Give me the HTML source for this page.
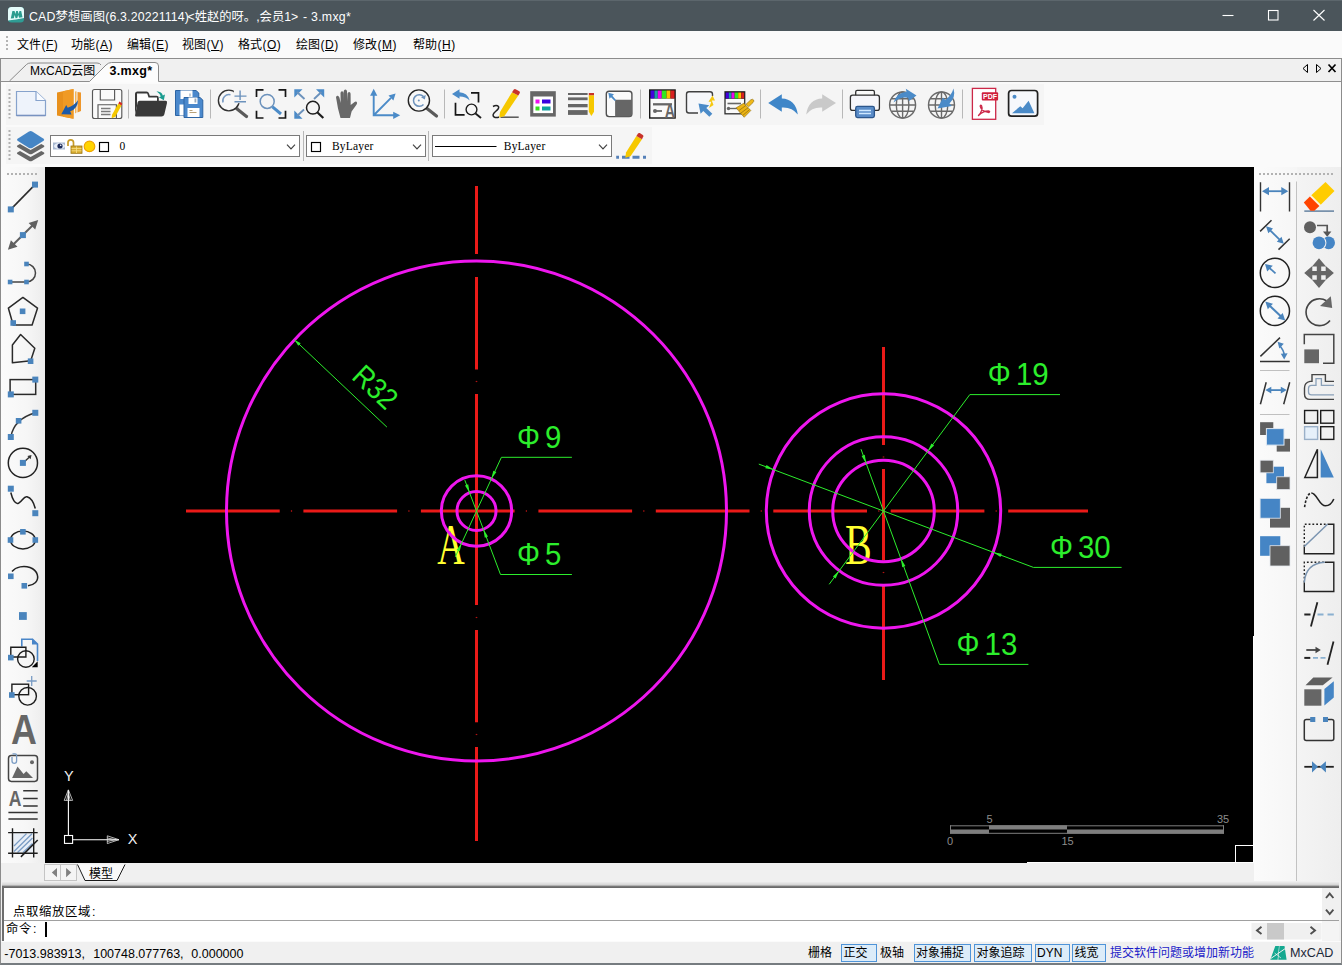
<!DOCTYPE html>
<html lang="zh-CN">
<head>
<meta charset="utf-8">
<title>CAD梦想画图</title>
<style>
*{box-sizing:border-box;margin:0;padding:0}
html,body{width:1342px;height:965px;overflow:hidden;background:#f0f0f0}
body{position:relative;font-family:"Liberation Sans","Noto Sans CJK SC",sans-serif;font-size:12px;color:#000}
.abs{position:absolute}
#title{left:0;top:0;width:1342px;height:30.5px;background:#4b555b;border-top:1px solid #5c666c;color:#fff}
#title .t{position:absolute;top:7.5px;font-size:12.3px;line-height:16px;white-space:nowrap}
#menu{left:0;top:30.5px;width:1342px;height:27.5px;background:#fafafa}
#menu i{font-style:normal;letter-spacing:0.5px;margin-left:0.5px}
#menu span{position:absolute;top:6.9px;font-size:12px;line-height:16px;white-space:nowrap}
#menu u{text-decoration:underline;text-underline-offset:1px}
#frame{left:0;top:58px;width:1341.5px;height:907px;border:1px solid #8c8c8c;border-bottom:2px solid #767c80;background:#f0f0f0}
#tabstrip{left:1px;top:59px;width:1340px;height:22px;background:#f0f0f0}
#tabline{left:1px;top:81px;width:1340px;height:1px;background:#8e8e8e}
#tbarea{left:1px;top:82px;width:1340px;height:85px;background:#fafafa}
#tb1{left:6px;top:84px;width:1038px;height:41px;background:#f5f5f5}
#tb2{left:6px;top:127px;width:646px;height:37px;background:#f5f5f5}
.combo{position:absolute;top:135px;height:22px;background:#fff;border:1px solid #7a7a7a}
.ctx{position:absolute;top:139px;font-family:"Liberation Serif","Noto Serif CJK SC",serif;font-size:11.5px;line-height:14px;letter-spacing:0.2px;white-space:nowrap}
#leftbar{left:1px;top:167px;width:44px;height:696px;background:linear-gradient(90deg,#fbfbfb 0,#f6f6f6 60%,#ececec 100%)}
#rightbar{left:1254px;top:167px;width:87px;height:714px;background:linear-gradient(90deg,#fbfbfb 0,#f6f6f6 43px,#f6f6f6 100%)}
#canvasbg{left:44.5px;top:167.3px;width:1209.1px;height:695.7px;background:#000}
#modelstrip{left:1px;top:863px;width:1252px;height:19px;background:#f0f0f0}
#cmd{left:4px;top:888px;width:1335px;height:53px;background:#fff}
#cmdtop{left:2px;top:882px;width:1337px;height:6px;background:linear-gradient(180deg,#ececec 0,#d4d4d4 50%,#8a8a8a 68%,#6a6a6a 80%,#6a6a6a 100%)}
#cmdleft{left:2px;top:886px;width:2px;height:55px;background:#6e6e6e}
#status{left:1px;top:941px;width:1340px;height:22px;background:#f0f0f0}
.sb{position:absolute;top:944px;height:18px;font-size:12px;line-height:18.5px;white-space:nowrap;text-align:left}
.sb.on{background:#dcecf9;border:1px solid #4f94d8;line-height:16.5px;padding-left:1.5px}
.cn{font-family:"Liberation Sans","Noto Sans CJK SC",sans-serif}
</style>
</head>
<body>
<div id="title" class="abs">
<div class="t" style="left:29px;letter-spacing:0.16px">CAD梦想画图(6.3.20221114)</div>
<div class="t" style="left:187.5px">&lt;姓赵的呀。,会员1&gt;</div>
<div class="t" style="left:303px">-</div>
<div class="t" style="left:311px;letter-spacing:0.3px">3.mxg*</div>
</div>
<div id="menu" class="abs">
<span style="left:17px">文件<i>(<u>F</u>)</i></span>
<span style="left:71px">功能<i>(<u>A</u>)</i></span>
<span style="left:127px">编辑<i>(<u>E</u>)</i></span>
<span style="left:182px">视图<i>(<u>V</u>)</i></span>
<span style="left:238px">格式<i>(<u>O</u>)</i></span>
<span style="left:296px">绘图<i>(<u>D</u>)</i></span>
<span style="left:353px">修改<i>(<u>M</u>)</i></span>
<span style="left:413px">帮助<i>(<u>H</u>)</i></span>
</div>
<div id="frame" class="abs"></div>
<div id="tabstrip" class="abs"></div>
<div id="tabline" class="abs"></div>
<div id="tbarea" class="abs"></div>
<div id="tb1" class="abs"></div>
<div id="tb2" class="abs"></div>
<div id="leftbar" class="abs"></div>
<div id="rightbar" class="abs"></div><div class="abs" style="left:1297px;top:167px;width:44px;height:714px;background:linear-gradient(90deg,#f4f4f4,#eeeeee)"></div>
<div id="canvasbg" class="abs"></div>
<div id="modelstrip" class="abs"></div>
<div id="cmd" class="abs"></div><div id="cmdtop" class="abs"></div><div id="cmdleft" class="abs"></div>
<div id="status" class="abs"></div><div class="abs" style="left:1px;top:941px;width:1340px;height:1px;background:#fbfbfb"></div>

<!-- combos -->
<div class="combo" style="left:50px;width:250px"></div>
<div class="combo" style="left:306px;width:120px"></div>
<div class="combo" style="left:432px;width:180px"></div>

<svg class="abs" style="left:0;top:0" width="1342" height="965" viewBox="0 0 1342 965">
<g id="drawing" fill="none">
<g fill="#ffff30" stroke="none" font-family="Liberation Serif, serif" font-size="56">
<text transform="translate(437.3,564) scale(0.68,1)">A</text>
<text transform="translate(845.1,564) scale(0.716,1)">B</text>
</g>
<g stroke="#ea1a18" stroke-width="3">
<path d="M186.0 511H279.7"/>
<path d="M290.9 511h1.2" stroke-width="1.6" opacity=".75"/>
<path d="M303.4 511H397.1"/>
<path d="M408.3 511h1.2" stroke-width="1.6" opacity=".75"/>
<path d="M420.9 511H514.6"/>
<path d="M525.8 511h1.2" stroke-width="1.6" opacity=".75"/>
<path d="M538.4 511H632.1"/>
<path d="M643.2 511h1.2" stroke-width="1.6" opacity=".75"/>
<path d="M655.8 511H749.5"/>
<path d="M760.7 511h1.2" stroke-width="1.6" opacity=".75"/>
<path d="M773.3 511H867.0"/>
<path d="M878.2 511h1.2" stroke-width="1.6" opacity=".75"/>
<path d="M890.7 511H984.4"/>
<path d="M995.6 511h1.2" stroke-width="1.6" opacity=".75"/>
<path d="M1008.2 511H1088.0"/>
<path d="M476.5 186V254"/>
<path d="M476.5 277V369.5"/>
<path d="M476.5 394V605"/>
<path d="M476.5 630V722.3"/>
<path d="M476.5 747V841"/>
<path d="M476.5 380.9v1.2" stroke-width="1.6" opacity=".75"/>
<path d="M476.5 616.9v1.2" stroke-width="1.6" opacity=".75"/>
<path d="M476.5 733.9v1.2" stroke-width="1.6" opacity=".75"/>
<path d="M883.5 347V445"/>
<path d="M883.5 469V560.5"/>
<path d="M883.5 584.5V680"/>
<path d="M883.5 456.4v1.2" stroke-width="1.6" opacity=".75"/>
<path d="M883.5 571.9v1.2" stroke-width="1.6" opacity=".75"/>
</g>
<g stroke="#ee16ee" stroke-width="3">
<circle cx="476.5" cy="511.0" r="250.00"/>
<circle cx="476.5" cy="511.0" r="35.16"/>
<circle cx="476.5" cy="511.0" r="19.53"/>
<circle cx="883.5" cy="511.0" r="117.19"/>
<circle cx="883.5" cy="511.0" r="74.22"/>
<circle cx="883.5" cy="511.0" r="50.78"/>
</g>
<g stroke="#2cee2c" stroke-width="1">
<path d="M571.9 457.3H501.4L455.3 556.8"/>
<path d="M491.3 479.1L493.3 470.7L496.4 472.1Z" fill="#2cee2c" stroke="none"/>
<path d="M461.7 542.9L459.7 551.3L456.6 549.9Z" fill="#2cee2c" stroke="none"/>
<path d="M571.9 574.5H500.5L464.8 480.1"/>
<path d="M483.4 529.3L488.0 536.6L484.8 537.8Z" fill="#2cee2c" stroke="none"/>
<path d="M469.6 492.7L465.0 485.4L468.2 484.2Z" fill="#2cee2c" stroke="none"/>
<path d="M1060.0 394.6H969.8L829.2 584.3"/>
<path d="M927.7 451.4L931.4 443.5L934.1 445.6Z" fill="#2cee2c" stroke="none"/>
<path d="M839.3 570.6L835.6 578.5L832.9 576.4Z" fill="#2cee2c" stroke="none"/>
<path d="M1121.6 567.4H1033.4L758.8 464.1"/>
<path d="M993.2 552.3L1001.7 553.7L1000.5 556.9Z" fill="#2cee2c" stroke="none"/>
<path d="M773.8 469.7L765.3 468.3L766.5 465.1Z" fill="#2cee2c" stroke="none"/>
<path d="M1028.4 664.4H939.4L861.0 449.2"/>
<path d="M900.9 558.7L905.4 566.1L902.2 567.3Z" fill="#2cee2c" stroke="none"/>
<path d="M866.1 463.3L861.6 455.9L864.8 454.7Z" fill="#2cee2c" stroke="none"/>
<path d="M294.9 340.2L386.9 427.1"/>
<path d="M294.4 339.7L300.7 343.3L298.3 345.8Z" fill="#2cee2c" stroke="none"/>
</g>
<g fill="#2cee2c" stroke="none" font-family="Liberation Sans, sans-serif" font-size="32">
<text transform="translate(516.9,448) scale(0.9,1)">Φ</text><text transform="translate(545.0,448) scale(0.92,1)">9</text>
<text transform="translate(516.9,564.6) scale(0.9,1)">Φ</text><text transform="translate(545.0,564.6) scale(0.92,1)">5</text>
<text transform="translate(987.8,384.6) scale(0.9,1)">Φ</text><text transform="translate(1015.9,384.6) scale(0.92,1)">19</text>
<text transform="translate(1049.8999999999999,557.6) scale(0.9,1)">Φ</text><text transform="translate(1078.0,557.6) scale(0.92,1)">30</text>
<text transform="translate(956.5,655.2) scale(0.9,1)">Φ</text><text transform="translate(984.6,655.2) scale(0.92,1)">13</text>
<text transform="translate(350.5,377.9) rotate(43.2) scale(0.885,1)" font-size="30" x="0" y="0">R32</text>
</g>
<g stroke="#fff" stroke-width="1.1">
<rect x="64.5" y="835.5" width="8.1" height="7.9"/>
<path d="M68.4 835.5V790M73 839.7H119"/>
<path d="M68.4 789.8L64.2 800.4H72.6ZM68.4 792.5L66.6 800.4M68.4 792.5L70.2 800.4" stroke-width=".75" stroke="#e8e8e8"/>
<path d="M119 839.7L107.3 835.8V843.6ZM116.2 839.7L107.3 838M116.2 839.7L107.3 841.4" stroke-width=".75" stroke="#e8e8e8"/>
</g>
<g fill="#f0f0f0" stroke="none" font-family="Liberation Sans, sans-serif" font-size="14.5"><text x="63.9" y="780.6">Y</text><text x="127.7" y="843.8">X</text></g>
<g fill="#7e7e7e" stroke="none">
<rect x="950" y="825.3" width="274" height="1"/><rect x="950" y="832.8" width="274" height="1"/>
<rect x="950" y="829.5" width="39" height="4"/><rect x="989" y="825.3" width="78" height="4.2"/><rect x="1067" y="829.5" width="157" height="4"/>
<rect x="950" y="825.3" width="1" height="8"/><rect x="1223" y="825.3" width="1" height="8"/>
</g>
<g fill="#8c8c8c" stroke="none" font-family="Liberation Sans, sans-serif" font-size="11" text-anchor="middle">
<text x="989.5" y="822.5">5</text><text x="1223" y="822.5">35</text><text x="950" y="844.5">0</text><text x="1067.5" y="844.5">15</text>
</g>
<g stroke="#fff" stroke-width="1"><path d="M1027 862.5H1253.5M1253.5 636V863"/><rect x="1235.5" y="845.5" width="18" height="17"/></g>
</g>
<g id="chrome">
<!-- app icon -->
<rect x="8" y="7" width="16" height="15.5" rx="3.5" fill="#2f9c94"/>
<path d="M8 10.5a3.5 3.5 0 0 1 3.500-3.500h9a3.500 3.500 0 0 1 3.500 3.500v7.500q-8 1.600-16 2.500z" fill="#e4fbfa"/>
<path d="M10.800 18.500l1.600-7.500h2.200l.700 3 .900-3h1.600l.900 3 .700-3h1.800l1.300 6.300-3.400.500-.900-2.800-.900 3-1.700.200-.900-3.200-.900 3.300z" fill="#2a9d8f"/>
<!-- window controls -->
<g stroke="#fff" stroke-width="1.100" fill="none">
<path d="M1222.500 15.500h11"/><rect x="1268.500" y="10.500" width="9.500" height="9.500"/><path d="M1313.500 10l11 10.500M1324.500 10l-11 10.500"/>
</g>
<!-- menu gripper -->
<g fill="#b4b4b4">
<rect x="6" y="36" width="2" height="2"/><rect x="6" y="40" width="2" height="2"/><rect x="6" y="44" width="2" height="2"/><rect x="6" y="48" width="2" height="2"/>
</g>
<!-- tabs -->
<path d="M9.500 81L26.500 64.500Q28 63 30.500 63H97Q100 63 101 65" fill="#f0f0f0" stroke="#8a8a8a" stroke-width="1"/>
<path d="M89.500 81.500L106 65Q108.500 62.500 111.500 62.500H155Q158.500 62.500 158.500 66V81.500L158.500 82.500H89.500Z" fill="#fcfcfc" stroke="none"/>
<path d="M89.500 81.500L106 65Q108.500 62.500 111.500 62.500H155Q158.500 62.500 158.500 66V81.500" fill="none" stroke="#8a8a8a" stroke-width="1"/>
<!-- tab strip nav -->
<g stroke="#000" stroke-width="1" fill="none"><path d="M1307.500 64.500v8l-4.500-4zM1316.500 64.500v8l4.500-4z"/></g>
<path d="M1328.500 64.500l7 7.500M1335.500 64.500l-7 7.500" stroke="#000" stroke-width="1.700" fill="none"/>
<!-- model tab nav -->
<rect x="44.500" y="864.500" width="16" height="16" fill="#f4f4f4" stroke="#c4c4c4"/><rect x="60.500" y="864.500" width="16" height="16" fill="#f4f4f4" stroke="#c4c4c4"/>
<path d="M57 868V877.200L51.800 872.600ZM66.100 868V877.200L71.300 872.600Z" fill="#808080"/>
<path d="M77.500 864.500L85 880.500H117L125 864.500Z" fill="#f9f9f9"/>
<path d="M77.500 864.500L85 880.500H117L125 864.500" fill="none" stroke="#1a1a1a" stroke-width="1"/>
<!-- scrollbars -->
<rect x="1322" y="888" width="17" height="32" fill="#f0f0f0"/>
<rect x="1251.500" y="923" width="70" height="16.500" fill="#f0f0f0"/>
<rect x="1322" y="921" width="17" height="20" fill="#f4f4f4"/>
<rect x="1267" y="923" width="17" height="16.500" fill="#c9c9c9"/>
<g fill="none" stroke="#505050" stroke-width="1.900"><path d="M1326 898L1329.700 893.600L1333.400 898M1326 909.700L1329.700 914.100L1333.400 909.700M1261.500 926.800L1257 930.400L1261.500 934M1310.500 926.800L1315 930.400L1310.500 934"/></g>
<path d="M4 920.500H1339" stroke="#a0a0a0" stroke-width="1"/>
<!-- mxcad logo -->
<path d="M1270.300 959.700L1275.300 946H1279L1277.600 959.700ZM1279.500 946H1284.500L1286.600 959.700H1278.300Z" fill="#14a890"/>
<path d="M1270.800 958.500L1285.300 948.500" stroke="#f0f0f0" stroke-width="1"/><path d="M1274.600 953L1281 958" stroke="#f0f0f0" stroke-width=".7"/>
</g>

<g id="top-toolbar">
<!-- grippers -->
<g fill="#b2b2b2">
<path d="M8.500 89h2v2h-2zM8.500 93h2v2h-2zM8.500 97h2v2h-2zM8.500 101h2v2h-2zM8.500 105h2v2h-2zM8.500 109h2v2h-2zM8.500 113h2v2h-2zM8.500 117h2v1.500h-2z"/>
<path d="M8.500 130h2v2h-2zM8.500 134h2v2h-2zM8.500 138h2v2h-2zM8.500 142h2v2h-2zM8.500 146h2v2h-2zM8.500 150h2v2h-2zM8.500 154h2v2h-2zM8.500 158h2v2h-2z"/>
</g>
<!-- separators -->
<g stroke="#b8b8b8" stroke-width="1"><path d="M128.500 89.500v29M210.500 89.500v29M444.500 89.500v29M640.500 89.500v29M760.500 89.500v29M842.500 89.500v29M962.500 89.500v29M303.500 131v30M428.500 131v30"/></g>

<!-- 1 new -->
<path d="M16.500 91.500H36L45.500 100.500V115.500H16.500Z" fill="#eef3fb" stroke="#86a2cc" stroke-width="1.200"/>
<path d="M36 91.500V100.500H45.500" fill="#f8fbff" stroke="#86a2cc" stroke-width="1.200"/>
<path d="M16.500 115.500H45.500" stroke="#7892c0" stroke-width="1.600"/>

<!-- 2 orange folder with arrow -->
<path d="M57 92.500L73.500 89V118.800L57 115.500Z" fill="#e8901c"/>
<path d="M63 91.300L73.500 89V118.800L63 116.700Z" fill="#f09a24"/>
<path d="M75 91.500L76.500 91.200V112.500L75 113.500Z" fill="#f4b456"/>
<path d="M77.500 92L81 92.500V111L77.500 112.500Z" fill="#ee962a"/>
<path d="M78 100.300Q77.800 109 70.200 111.200L71.500 114.600L61.300 114.300L66.200 105L67.700 107.800Q74 105.800 78 100.300Z" fill="#1c5aa8"/>

<!-- 3 save with pencil -->
<rect x="92.500" y="89.500" width="29.300" height="29" rx="2" fill="#fafafa" stroke="#585858" stroke-width="1.150"/>
<path d="M100.300 89.500V100H114.600V89.500M98 118.500V104.700H116.400V118.500" fill="none" stroke="#585858" stroke-width="1.150"/>
<path d="M101 108.500h9.500M101 111.500h9.500M101 114.500h9.500" stroke="#7c7c7c" stroke-width="1.500"/>
<path d="M118.300 103.500L121.500 105.500L115.200 117L111.600 118.300L112 114.800Z" fill="#f5c800"/>
<path d="M118.300 103.500L119.500 101.600L122.300 103.600L121.500 105.500Z" fill="#d82a20"/>

<!-- 4 dark folder with teal arrow -->
<path d="M135 94Q135 91.500 137.500 91.500H146.500Q148.500 91.500 149 93.500L149.800 95.800H156.500Q158.800 95.800 158.800 98V101H137.800V95H146.500" fill="#fff"/>
<path d="M135 114V94Q135 91.500 137.500 91.500H146.500Q148.500 91.500 149 93.500L149.800 95.800H156.500Q158.800 95.800 158.800 98V101.500H157V97.600H148.500L147.200 93.400H137V106Z" fill="#383838"/>
<path d="M139.500 100.800H165.500Q167.500 100.800 167 103L164.300 114.600Q163.800 116.600 161.500 116.600H137Q134.600 116.600 135.200 114.400L137.600 102.600Q138 100.800 139.500 100.800Z" fill="#383838"/>
<path d="M156.500 91.300Q162 91.800 162.800 95.500L165 94.600L163.800 100.200L158.800 97.300L160.800 96.400Q160 93.800 156.500 91.300Z" fill="#1a9c90"/>

<!-- 5 double floppy -->
<path d="M175.500 90.500H196L198.800 93V115.500H175.500Z" fill="#4a88cc" stroke="#2c64a4" stroke-width="1"/>
<rect x="180.500" y="90.500" width="12" height="8.500" fill="#fff"/>
<rect x="179.500" y="104.500" width="10" height="11" fill="#fff"/>
<path d="M184 97.500H200L202.800 100V117.500H184Z" fill="#4a88cc" stroke="#2c64a4" stroke-width="1"/>
<rect x="188.500" y="97.500" width="9" height="6.500" fill="#fff"/><rect x="194.500" y="98.500" width="1.800" height="4" fill="#9ab"/>
<rect x="187.500" y="108" width="12" height="9" fill="#fff"/>
<path d="M189.500 110.500h3M189.500 112.500h7" stroke="#b9a27a" stroke-width="1"/>
<path d="M190 93.500v3" stroke="#9ab" stroke-width="1.200"/>

<!-- 6 zoom +/- -->
<path d="M236.500 108.500L246.500 116.500" stroke="#5a5a5a" stroke-width="3.200" stroke-linecap="round"/>
<circle cx="228.800" cy="100.500" r="10.400" fill="#f8f8f8" stroke="#303030" stroke-width="1.400"/>
<path d="M223 102.500A6.200 6.200 0 0 1 230.500 94.800" fill="none" stroke="#7a9cc4" stroke-width="1.500"/>
<rect x="233.800" y="90" width="13.500" height="13.200" fill="#f5f5f5"/>
<path d="M234.500 95.400H246.500V96.700H234.500ZM239.400 90.500h1.400v9.500h-1.400ZM234.500 101.100H246V102.400H234.500Z" fill="#6c92bc"/>

<!-- 7 zoom window -->
<path d="M263.500 89.800H256.500V97M278.500 89.800H285.500V97M263.500 118H256.500V110.800M278.500 118H285.500V110.800" fill="none" stroke="#161616" stroke-width="1.700"/>
<circle cx="267.200" cy="101.400" r="7" fill="none" stroke="#6c92bc" stroke-width="1.500"/>
<path d="M272.500 106.800L281 114" stroke="#4b8bc8" stroke-width="3"/>

<!-- 8 zoom extents -->
<g fill="#4b8bc8"><path d="M294.300 89.300H302.500L294.300 97.500ZM324.200 89.300V97.500L316 89.300ZM294.300 118.700V110.500L302.500 118.700Z"/></g>
<path d="M297 92L304.500 99M321.500 92L314 99M297 116L304 109.500" stroke="#6c92bc" stroke-width="1.900"/>
<circle cx="312.900" cy="107.700" r="6.400" fill="none" stroke="#1c1c1c" stroke-width="1.500"/>
<path d="M317.500 112.500L323.300 118" stroke="#1c1c1c" stroke-width="2.200"/>

<!-- 9 hand -->
<path d="M340.500 118L338 108.500L336 97.200Q336.200 95.400 337.800 95.700Q339 96.100 339.400 97.500L340.700 103L340.500 93Q340.700 91.300 342 91.300Q343.400 91.400 343.600 93L343.900 101L343.700 91.200Q344 89.500 345.400 89.500Q346.800 89.600 347 91.200L347.400 101L347.600 93.600Q347.900 92 349.100 92Q350.500 92.100 350.600 93.700L350.700 105L354.600 101.900Q356.500 101 357.100 102.700Q357.200 104 355.900 105.400L351.600 111.600L350 118Z" fill="#686868"/>

<!-- 10 axes -->
<g stroke="#4b8bc8" stroke-width="1.900" fill="none"><path d="M373.700 95V115.300H394M374.500 114.500L391 97.800"/></g>
<g fill="#4b8bc8"><path d="M373.700 88.800L377.300 95.700H370.100ZM400.200 115.300L393.200 118.900V111.700ZM395.600 93.400L393.400 100.500L388.500 95.500Z"/></g>

<!-- 11 zoom previous -->
<path d="M427 108.500L436.500 116" stroke="#5a5a5a" stroke-width="3.200" stroke-linecap="round"/>
<circle cx="418.900" cy="100.500" r="10.600" fill="#f8f8f8" stroke="#242424" stroke-width="1.400"/>
<path d="M423.500 104.500A5.800 5.800 0 1 1 423.500 96.500" fill="none" stroke="#6c92bc" stroke-width="1.500"/>
<path d="M425.800 95L424.800 99.500L421 97.200Z" fill="#6c92bc"/>
<circle cx="418.800" cy="100.500" r="1" fill="#6c92bc"/>

<!-- 12 zoom back -->
<path d="M471 92.800H478.500V102.500M455.500 102.800V114.900H464.600" fill="none" stroke="#161616" stroke-width="1.700"/>
<circle cx="471.500" cy="109.500" r="5.400" fill="none" stroke="#1c1c1c" stroke-width="1.400"/>
<path d="M475.500 113.500L481 118" stroke="#1c1c1c" stroke-width="1.900"/>
<path d="M452 94L459.500 89.300V92.200Q467.500 92.500 469.700 100.500Q465.500 96.500 459.500 96.600V98.800Z" fill="#4b8bc8"/>

<!-- 13 pencil with squiggle -->
<path d="M493 106.500Q496.500 104.500 498.500 106.500Q499.500 108.500 495.500 111.500Q491.500 115 494 117Q496.500 118.200 499 117" fill="none" stroke="#222" stroke-width="1.500"/>
<path d="M500.500 117.200H518.700" stroke="#555" stroke-width="1.500"/>
<path d="M512 92.200L518.300 95.600L504.300 116.200L499.200 117.600L500 112Z" fill="#f6c800"/>
<path d="M512 92.200L513.800 89.500Q514.600 88.700 515.600 89.200L519.300 91.300Q520.200 92 519.800 93L518.300 95.600Z" fill="#c8322a"/>

<!-- 14 palette -->
<rect x="530.200" y="91.200" width="25.600" height="25.400" fill="#666"/>
<rect x="533.300" y="96.500" width="19.700" height="16.600" fill="#fff"/>
<rect x="535.500" y="99.500" width="4" height="4" fill="#f010f0"/><rect x="542" y="99.500" width="8.500" height="4" fill="#3a00e0"/>
<rect x="535.500" y="106.500" width="4" height="4" fill="#38e020"/><rect x="542" y="106.500" width="8.500" height="4" fill="#10a0a0"/>

<!-- 15 lines with pencil -->
<g fill="#666"><rect x="568" y="93" width="19.600" height="2"/><rect x="568" y="97.400" width="19.600" height="2.800"/><rect x="568" y="104" width="19.600" height="3.300"/><rect x="568" y="110.100" width="19.600" height="4.800"/></g>
<path d="M588.800 95.200H594V111.700L591.400 116L588.800 111.700Z" fill="#f6c800"/><rect x="588.800" y="93" width="5.200" height="2.200" fill="#c8322a"/>

<!-- 16 box with gray square -->
<rect x="606.300" y="91.300" width="25.600" height="25.300" rx="2.800" fill="#fafafa" stroke="#505050" stroke-width="1.400"/>
<path d="M615.100 99.700H632V113.800Q632 116.600 629.200 116.600H615.100Z" fill="#666"/>
<path d="M608.300 92.800L614 94.200L612.400 95.800L616 100L614.800 101L611 97.200L609.500 98.800Z" fill="#4b8bc8"/>

<!-- 17 colorbar A -->
<rect x="649.700" y="90" width="25.400" height="28" fill="#fafafa" stroke="#141414" stroke-width="1.400"/>
<rect x="650" y="90" width="25" height="8.500" fill="#141414"/>
<rect x="650.500" y="90.500" width="4" height="8" fill="#4400dd"/><rect x="654.500" y="90.500" width="3.300" height="8" fill="#189ca4"/><rect x="657.800" y="90.500" width="4" height="8" fill="#f000f0"/><rect x="661.800" y="90.500" width="4.700" height="8" fill="#30e820"/><rect x="666.500" y="90.500" width="4" height="8" fill="#f8c000"/><rect x="670.500" y="90.500" width="4" height="8" fill="#d82020"/>
<path d="M653 104.300H672" stroke="#666" stroke-width="2.300"/>
<path d="M654.500 111H662" stroke="#666" stroke-width="1.800"/><circle cx="655" cy="111" r="2" fill="#666"/>
<text transform="translate(664.800,117.600) scale(0.680,1)" font-family="Liberation Sans, sans-serif" font-weight="bold" font-size="21" fill="#666">A</text>

<!-- 18 select with arrow -->
<path d="M698 113H689Q686.500 113 686.500 110.500V94.200Q686.500 91.700 689 91.700H710Q712.500 91.700 712.500 94.200V96" fill="#f6f7fa" stroke="#404040" stroke-width="1.400"/>
<path d="M712.500 95.500L715 100.500H711.800L713.500 105L709 108L711.300 101.800H708.500Z" fill="#f6c810"/>
<path d="M698.500 103.500L709.200 105.200L706.300 108L712.300 113.800L709.300 116.800L703.300 111L700.600 113.800Z" fill="#4b8bc8"/>

<!-- 19 colorbar brush -->
<rect x="725" y="91.800" width="19.700" height="22" fill="#fafafa" stroke="#303030" stroke-width="1.300"/>
<rect x="725" y="91.800" width="19.700" height="7" fill="#1c1c1c"/>
<rect x="725.700" y="92.500" width="3.200" height="6" fill="#4400dd"/><rect x="728.900" y="92.500" width="2.600" height="6" fill="#189ca4"/><rect x="731.500" y="92.500" width="3.100" height="6" fill="#f000f0"/><rect x="734.600" y="92.500" width="3.600" height="6" fill="#30e820"/><rect x="738.200" y="92.500" width="3" height="6" fill="#f8c000"/><rect x="741.200" y="92.500" width="2.900" height="6" fill="#d82020"/>
<path d="M727.500 103.500H741" stroke="#666" stroke-width="1.600"/><path d="M728 108.500H737" stroke="#666" stroke-width="1.400"/><circle cx="728.500" cy="108.500" r="1.700" fill="#666"/>
<path d="M750.800 99.800Q752.600 98.600 753.600 100Q754.300 101.300 753 102.600L748.600 106.800L746 104.300Z" fill="#f0b818" stroke="#8a6a10" stroke-width=".6"/>
<path d="M736.200 107.800L743.800 103.200L750.800 110.500L744.200 117.300Q740 113 736.200 107.800Z" fill="#ecb414" stroke="#8a6a10" stroke-width=".6"/>
<path d="M739 110.500L745.800 105.500M741 113L748 107.800M743 115.200L749.600 109.600" stroke="#8a6a10" stroke-width=".7" fill="none"/>

<!-- 20 undo -->
<path d="M768.200 103L781.800 94.300V98.600Q795.500 99 797.800 114.500Q792 106.800 781.800 107.500V111.700Z" fill="#3f86c8"/>
<!-- 21 redo -->
<path d="M836 103L822.200 94.300V98.600Q808.500 99 806.200 114.500Q812 106.800 822.200 107.500V111.700Z" fill="#c9c9c9"/>

<!-- 22 printer -->
<rect x="855.700" y="90.400" width="18.700" height="6" rx="1.500" fill="#fafafa" stroke="#303030" stroke-width="1.300"/>
<rect x="850.400" y="95.200" width="29" height="15.200" rx="2.200" fill="#f6f6fa" stroke="#303030" stroke-width="1.300"/>
<rect x="855.700" y="106.400" width="18.700" height="11.200" rx="1.800" fill="#5a8cc8" stroke="#2c568c" stroke-width="1.300"/>
<path d="M859 110.600H871M859 113.600H871" stroke="#cfe8ff" stroke-width="1.500"/>

<!-- 23 globe arrow 1 -->
<g fill="none" stroke="#6a6a6a" stroke-width="1.400">
<circle cx="902.600" cy="105" r="13"/><ellipse cx="902.600" cy="105" rx="6.300" ry="13"/><path d="M902.600 92V118M889.600 105H915.600M891.400 98.800H913.800M891.400 111.300H913.800"/>
</g>
<path d="M893.500 102.500Q897 92.500 906.500 91.800L905.800 88.800L916.500 95.500L909 101L908.200 97.800Q901 96 893.500 102.500Z" fill="#4b8bc8"/>
<!-- 24 globe arrow 2 -->
<g fill="none" stroke="#6a6a6a" stroke-width="1.400">
<circle cx="941.500" cy="105" r="13"/><ellipse cx="941.500" cy="105" rx="6.300" ry="13"/><path d="M941.500 92V118M928.500 105H954.500M930.300 98.800H952.700M930.300 111.300H952.700"/>
</g>
<path d="M953.500 88.500Q956 97 949.500 103.500L951.800 106L937.500 108.500L943 97.500L945.200 100Q951.500 95.500 953.500 88.500Z" fill="#4b8bc8"/>

<!-- 25 pdf -->
<rect x="972.400" y="88.400" width="23.300" height="30.900" fill="#fff" stroke="#cc2848" stroke-width="1.300"/>
<rect x="981.800" y="92.200" width="16.300" height="8.300" rx="1" fill="#d0203c"/>
<text x="983" y="99.300" font-family="Liberation Sans, sans-serif" font-weight="bold" font-size="7.500" fill="#fff" textLength="14" lengthAdjust="spacingAndGlyphs">PDF</text>
<path d="M978.500 115.500Q983.500 110 981.500 105.500Q980.300 104.800 980.200 106.300Q981.500 111.500 989 112.500Q990.500 111.300 988.500 110.800Q983 110.800 978.500 115.500Z" fill="none" stroke="#cc2848" stroke-width="1.300" stroke-linejoin="round"/>

<!-- 26 image -->
<rect x="1008.600" y="90.500" width="29" height="25.700" rx="3" fill="#f6f8fc" stroke="#202020" stroke-width="1.700"/>
<circle cx="1014.500" cy="96.800" r="2" fill="#4b8bc8"/>
<path d="M1012 113.200L1020.300 106.300L1022.600 108.200L1028.600 100.800L1034.400 113.200Z" fill="#4b8bc8"/>

<!-- layers icon -->
<path d="M17.300 152.500L20 151L30.600 157L41.300 151L44 152.500Q44.800 153.300 44 154L32 161Q30.600 161.700 29.200 161L17.300 154Q16.500 153.300 17.300 152.500Z" fill="#666"/>
<path d="M17.300 145.500L20 144L30.600 150L41.300 144L44 145.500Q44.800 146.300 44 147L32 154Q30.600 154.700 29.200 154L17.300 147Q16.500 146.300 17.300 145.500Z" fill="#666"/>
<path d="M17.600 138.700L29 131.500Q30.600 130.600 32.200 131.500L43.600 138.700Q44.800 139.700 43.600 140.700L32.200 147.900Q30.600 148.800 29 147.900L17.600 140.700Q16.400 139.700 17.600 138.700Z" fill="#4585c5"/>

<!-- combo 1 content -->
<path d="M53 142.500h12v7h-12z" fill="#a8b8d0"/><ellipse cx="59.500" cy="146" rx="5.500" ry="3" fill="#e8eef8"/><circle cx="60" cy="146" r="2.600" fill="#1c2c5c"/><circle cx="60.700" cy="145.300" r=".8" fill="#fff"/>
<path d="M68 146V142.500Q68 139.800 70.700 139.800Q73.500 139.800 73.500 142.500V146" fill="none" stroke="#c89c28" stroke-width="1.700"/>
<rect x="71" y="146" width="11" height="7.300" fill="#d8ac30" stroke="#9a7410" stroke-width=".8"/>
<path d="M71.500 148.500H81.500M71.500 150.800H81.500M76.500 146.500V153" stroke="#f8e088" stroke-width=".8"/>
<circle cx="89.500" cy="146.400" r="5.300" fill="#ffd400" stroke="#f0a400" stroke-width="1.200"/>
<rect x="99.500" y="142.500" width="9" height="9" fill="#fff" stroke="#000" stroke-width="1.150"/>
<!-- combo arrows -->
<g fill="none" stroke="#444" stroke-width="1.200"><path d="M287 144.600L291 148.800L295 144.600M413 144.600L417 148.800L421 144.600M599 144.600L603 148.800L607 144.600"/></g>
<!-- combo 2 square -->
<rect x="311.500" y="142.500" width="9" height="9" fill="#fff" stroke="#000" stroke-width="1.150"/>
<!-- combo 3 line -->
<path d="M435 146.500H496.500" stroke="#000" stroke-width="1"/>
<!-- pencil dash icon -->
<path d="M616.200 157.300H619M622 157.300H629.500M632.500 157.300H639.500M643 157.300H646" stroke="#5580b8" stroke-width="3"/>
<path d="M636.400 136L642 139.200L630.500 156.200L625.300 157.800L626 152.500Z" fill="#f6c800"/>
<path d="M636.400 136L638 133.400Q638.700 132.600 639.700 133.100L642.800 134.900Q643.700 135.600 643.300 136.600L642 139.200Z" fill="#c8322a"/>
</g>

<g id="left-toolbar">
<g fill="#b2b2b2"><path d="M7 173h2v2h-2zM11 173h2v2h-2zM15 173h2v2h-2zM19 173h2v2h-2zM23 173h2v2h-2zM27 173h2v2h-2zM31 173h2v2h-2zM35 173h2v2h-2z"/></g>
<!-- L1 line -->
<path d="M10.800 209.400L35 184.600" stroke="#2c2c2c" stroke-width="1.600"/>
<g fill="#4a84bc"><rect x="32" y="181.600" width="6" height="6"/><rect x="7.800" y="206.400" width="6" height="6"/></g>
<!-- L2 double arrow -->
<path d="M12.500 245.300L33.500 224.500" stroke="#606060" stroke-width="2"/>
<path d="M38.200 220L35.200 229.600L28.600 223ZM7.900 249.800L10.900 240.200L17.500 246.800Z" fill="#606060"/>
<rect x="19.900" y="232.100" width="6" height="6" fill="#4a84bc"/>
<!-- L3 line arc -->
<path d="M10 282H26.500A9 9 0 0 0 26.500 264" fill="none" stroke="#444" stroke-width="1.500"/>
<g fill="#4a84bc"><rect x="7.800" y="279.700" width="4.600" height="4.600"/><rect x="24.200" y="279.700" width="4.600" height="4.600"/><rect x="24.200" y="261.700" width="4.600" height="4.600"/></g>
<!-- L4 pentagon -->
<path d="M22.900 297.400L37.500 308.200L32.100 325H13.200L8.400 308.200Z" fill="none" stroke="#2a2a2a" stroke-width="1.500" stroke-linejoin="round"/>
<g fill="#4a84bc"><rect x="19.800" y="308.500" width="5.600" height="5.600"/><rect x="10.400" y="320.200" width="5.600" height="5.600"/></g>
<!-- L5 polygon -->
<path d="M20.600 334.500L34.800 348.200L30.700 360.800L12.400 362.800V345Z" fill="none" stroke="#2a2a2a" stroke-width="1.500" stroke-linejoin="round"/>
<rect x="27.800" y="358.400" width="5.600" height="5.600" fill="#4a84bc"/>
<!-- L6 rectangle -->
<rect x="10.100" y="379.600" width="25.600" height="14.800" fill="none" stroke="#2a2a2a" stroke-width="1.500"/>
<g fill="#4a84bc"><rect x="32.300" y="376.600" width="6" height="6"/><rect x="7.800" y="391.400" width="6" height="6"/></g>
<!-- L7 arc -->
<path d="M10.800 437Q14 419 35.300 412.800" fill="none" stroke="#333" stroke-width="1.500"/>
<g fill="#4a84bc"><rect x="32.300" y="409.800" width="6" height="6"/><rect x="15.800" y="418" width="5.600" height="5.600"/><rect x="7.800" y="434" width="6" height="6"/></g>
<!-- L8 circle -->
<circle cx="22.900" cy="462.900" r="14.600" fill="none" stroke="#222" stroke-width="1.500"/>
<path d="M23 463L29.500 457" stroke="#333" stroke-width="1.400"/><path d="M31.500 455L30.600 459.200L27.400 456Z" fill="#333"/>
<rect x="19.900" y="459.900" width="6" height="6" fill="#4a84bc"/>
<!-- L9 spline -->
<path d="M10.800 492.500C12.500 499.500 15 504.500 18.500 503.200C22.500 501.500 23.500 496 27 496.800C31 497.800 34 503.500 35.300 508.500" fill="none" stroke="#222" stroke-width="1.500"/>
<g fill="#4a84bc"><rect x="7.800" y="485.700" width="6" height="6"/><rect x="32.300" y="510.200" width="6" height="6"/></g>
<!-- L10 ellipse -->
<ellipse cx="22.900" cy="539.900" rx="12.400" ry="9" fill="none" stroke="#222" stroke-width="1.500"/>
<g fill="#4a84bc"><rect x="20.100" y="529" width="5.600" height="5.600"/><rect x="7.700" y="537.200" width="5.600" height="5.600"/><rect x="32.500" y="537.200" width="5.600" height="5.600"/></g>
<!-- L11 elliptic arc -->
<path d="M12 571.500C16 566.500 24 565.500 30 567.500C38 570.500 39.500 578 35.500 582.500C33.500 584.500 31 585.300 28 585.800" fill="none" stroke="#222" stroke-width="1.500"/>
<g fill="#4a84bc"><rect x="8" y="573.500" width="5.600" height="5.600"/><rect x="21.500" y="583" width="5.600" height="5.600"/></g>
<!-- L12 point -->
<rect x="19" y="612.100" width="7.800" height="7.800" fill="#4a84bc"/>
<!-- L13 insert block -->
<path d="M21.800 646.500V639.200H32.500L37.500 644.200V661" fill="none" stroke="#4a86c8" stroke-width="1.600"/>
<path d="M32 638.500L38 644.500H32Z" fill="#4a86c8"/>
<path d="M25.900 647.300H10.800V657H25.900Z" fill="none" stroke="#1c1c1c" stroke-width="1.400"/>
<circle cx="25.900" cy="659" r="8.300" fill="none" stroke="#1c1c1c" stroke-width="1.400"/>
<rect x="8" y="654.800" width="5.600" height="5.600" fill="#4a84bc"/>
<path d="M37.700 661.300V667.200H31.800Z" fill="#000"/>
<!-- L14 make block -->
<rect x="11.900" y="684.200" width="16.700" height="10.500" fill="none" stroke="#1c1c1c" stroke-width="1.400"/>
<circle cx="27.600" cy="696.300" r="8.800" fill="none" stroke="#1c1c1c" stroke-width="1.400"/>
<rect x="9" y="692.200" width="5.600" height="5.600" fill="#4a84bc"/>
<path d="M26.700 681H36.700M31.700 676V686" stroke="#7a9cc4" stroke-width="1.300"/>
<!-- L15 text A -->
<text transform="translate(11.100,743.900) scale(0.830,1)" font-family="Liberation Sans, sans-serif" font-weight="bold" font-size="43.200" fill="#666">A</text>
<!-- L16 image -->
<rect x="8.500" y="755.600" width="29" height="25.800" rx="2.800" fill="none" stroke="#444" stroke-width="1.500"/>
<path d="M12.100 778L17.500 766.600L23.600 774L26.300 771.300L33 778Z" fill="#666"/>
<circle cx="32" cy="762.300" r="2" fill="#666"/>
<path d="M12 757V761Q12 763.300 14.300 763.300Q16.600 763.300 16.600 761V755.500Q16.600 753.800 15 753.800H12.500" fill="none" stroke="#7a9cc4" stroke-width="1.300"/>
<!-- L17 mtext -->
<text transform="translate(8.700,806.300) scale(0.820,1)" font-family="Liberation Sans, sans-serif" font-weight="bold" font-size="21.500" fill="#666">A</text>
<path d="M23.200 790.800H37.700M23.200 798.600H37.700M23.200 805.900H37.700M8.400 812.400H37.700M8.400 819.100H37.700" stroke="#333" stroke-width="1.500"/>
<!-- L18 hatch -->
<rect x="13.300" y="833.400" width="19.600" height="19" fill="#e8eef6"/>
<path d="M14 846L26.500 833.600M14 851.500L32 833.800M17.500 852.500L32.500 838M23 852.500L32.500 843.500" stroke="#7a9cc4" stroke-width="1.300"/>
<path d="M12.500 828.300V857.500M33.700 828.300V857.500M8.100 832.600H37.700M8.100 853.200H37.700" stroke="#1c1c1c" stroke-width="1.400"/>
<path d="M20.900 856.900L37.700 840" stroke="#1c1c1c" stroke-width="1.500"/>
</g>

<g id="right-toolbar">
<path d="M1259 173h2v2h-2zM1263 173h2v2h-2zM1267 173h2v2h-2zM1271 173h2v2h-2zM1275 173h2v2h-2zM1279 173h2v2h-2zM1283 173h2v2h-2zM1287 173h2v2h-2zM1291 173h2v2h-2zM1295 173h2v2h-2zM1299 173h2v2h-2zM1303 173h2v2h-2zM1307 173h2v2h-2zM1311 173h2v2h-2zM1315 173h2v2h-2zM1319 173h2v2h-2zM1323 173h2v2h-2zM1327 173h2v2h-2zM1331 173h2v2h-2z" fill="#b2b2b2"/>
<path d="M1296.500 181.500V881" stroke="#c2c2c2" stroke-width="1"/>
<path d="M1260 370.500H1289.500M1260 414.500H1289.500" stroke="#c0c0c0" stroke-width="1"/>
<path d="M1260.500 182.200V211.500M1289.500 182.200V211.500" stroke="#333" stroke-width="1.400"/>
<path d="M1267.5 191.2L1282.8 191.2" stroke="#4a84bc" stroke-width="1.8"/><path d="M1262 191.2L1269 195.300L1269 187.100ZM1288.300 191.2L1281.300 195.300L1281.300 187.100Z" fill="#4a84bc"/>
<path d="M1260.100 231.400L1271.500 220.200M1278.500 249.600L1289.700 238.800" stroke="#333" stroke-width="1.500"/>
<path d="M1269.7 229.9L1280.1 240.2" stroke="#4a84bc" stroke-width="1.8"/><path d="M1266.0 226.3L1268.3 233.3L1273.0 228.4ZM1283.8 243.8L1276.8 241.7L1281.5 236.8Z" fill="#4a84bc"/>
<circle cx="1274.900" cy="272.900" r="14.600" fill="none" stroke="#222" stroke-width="1.500"/>
<path d="M1275.500 273.300L1269 267.500" stroke="#4a84bc" stroke-width="1.800"/><path d="M1265 263.900L1272.800 265.700L1267.200 271.500Z" fill="#4a84bc"/>
<circle cx="1274.900" cy="310.900" r="14.600" fill="none" stroke="#222" stroke-width="1.500"/>
<path d="M1269.4 305.5L1281.1 316.6" stroke="#4a84bc" stroke-width="2"/><path d="M1265.3 301.6L1267.8 309.2L1273.0 303.7ZM1285.2 320.5L1277.5 318.4L1282.7 312.9Z" fill="#4a84bc"/>
<path d="M1260.400 356.400L1280 337.600M1260 361.400H1289.700" stroke="#333" stroke-width="1.500"/>
<path d="M1279.500 345.500Q1283.800 350 1284.300 355.500" fill="none" stroke="#4a84bc" stroke-width="1.700"/>
<path d="M1277.600 341.800L1283.800 343.800L1279.300 348.600ZM1284.200 359.600L1280.800 353.800L1287.600 353.300Z" fill="#4a84bc"/>
<path d="M1260.400 404.300L1266.200 382.300M1283.700 404.300L1289.700 382.300" stroke="#333" stroke-width="1.500"/>
<path d="M1270.1 390.1L1282.0 390.1" stroke="#4a84bc" stroke-width="1.8"/><path d="M1265.3 390.1L1271.3 393.5L1271.3 386.7ZM1286.8 390.1L1280.8 393.5L1280.8 386.7Z" fill="#4a84bc"/>
<rect x="1260.100" y="422.200" width="13.200" height="12.800" fill="#606060"/><rect x="1276.700" y="438.800" width="13.300" height="12.800" fill="#606060"/>
<rect x="1266.400" y="428.600" width="17.600" height="16.500" fill="#4585c5" stroke="#dfe8f2" stroke-width="1"/>
<rect x="1266.400" y="466.700" width="17.600" height="16.500" fill="#4585c5"/>
<rect x="1260.100" y="460.200" width="13.200" height="12.600" fill="#606060" stroke="#e4e8ee" stroke-width=".8"/><rect x="1276.700" y="476.800" width="13.300" height="12.800" fill="#606060" stroke="#e4e8ee" stroke-width=".8"/>
<rect x="1270" y="507.800" width="20" height="19.800" fill="#606060"/>
<rect x="1260.100" y="498.400" width="20.200" height="19.800" fill="#4585c5" stroke="#e4e8ee" stroke-width=".8"/>
<rect x="1260.100" y="536.200" width="20.200" height="19.600" fill="#4585c5"/>
<rect x="1270" y="545.700" width="20" height="20.300" fill="#606060" stroke="#e4e8ee" stroke-width=".8"/>
<path d="M1304.300 211.100H1334" stroke="#5a7a9a" stroke-width="1.400"/>
<path d="M1311 195.600L1325.500 182L1334.500 191L1320.500 205Z" fill="#ffcc00"/>
<path d="M1309.800 196.700L1311.300 195.300L1320.800 204.700L1319.300 206.100Z" fill="#fff6d8"/>
<path d="M1303.800 202.400L1309.900 196.600L1319.400 206L1314.300 210.800H1310.500Z" fill="#ff4400"/>
<circle cx="1310" cy="227.300" r="6" fill="#606060"/>
<path d="M1317 225.500H1327.200V233" fill="none" stroke="#555" stroke-width="1.700"/><path d="M1323 231.500H1331.400L1327.200 236.800Z" fill="#555"/>
<circle cx="1328.600" cy="242.800" r="6.400" fill="#4585c5"/><circle cx="1319" cy="242.800" r="7.400" fill="#f2f2f2"/><circle cx="1319" cy="242.800" r="6.400" fill="#4585c5"/>
<path d="M1319 258.200L1326 266.400H1321.200V270.900H1325.700V266.100L1333.900 273.100L1325.700 280.100V275.300H1321.200V279.800H1326L1319 288L1312 279.800H1316.800V275.300H1312.300V280.100L1304.200 273.100L1312.300 266.100V270.900H1316.800V266.400H1312Z" fill="#666"/>
<path d="M1326.500 300.800A13.400 13.400 0 1 0 1330 320.500" fill="none" stroke="#444" stroke-width="1.600"/>
<path d="M1320 305.900L1330.800 296.300L1332.200 307.900Z" fill="#666"/>
<path d="M1304.300 344.300V334.600H1333.800V363.200H1323" fill="none" stroke="#444" stroke-width="1.500"/>
<rect x="1304.300" y="349.400" width="14.700" height="13.800" fill="#666"/>
<path d="M1334 381.400H1325.400V374.600H1312V381.400H1310Q1304.500 382.500 1304.500 388V394Q1304.500 399.400 1310 399.400H1334" fill="none" stroke="#444" stroke-width="1.400"/>
<path d="M1334 385.400H1321.400V378.700H1316V385.400H1311.500Q1308.500 385.400 1308.500 388.400V392Q1308.500 394.900 1311.500 394.900H1334" fill="none" stroke="#8aa0b8" stroke-width="1.300"/>
<g stroke="#1c1c1c" stroke-width="1.400" fill="#f0f0f0"><rect x="1304.600" y="410.500" width="13" height="12.700"/><rect x="1320.700" y="410.500" width="13.100" height="12.700"/><rect x="1320.700" y="426.700" width="13.100" height="12.700"/></g>
<rect x="1304.600" y="426.700" width="13" height="12.700" fill="#e6f0fa" stroke="#9ab0c8" stroke-width="1.400"/>
<path d="M1304.800 477.500L1317.400 449.200V477.500Z" fill="none" stroke="#222" stroke-width="1.500"/>
<path d="M1320.700 449.200V477.500H1333.800Z" fill="#4585c5"/>
<path d="M1304.600 507.100C1305.500 500 1308 493 1311.300 493" fill="none" stroke="#222" stroke-width="1.600" stroke-dasharray="2.500 1.600"/>
<path d="M1311.300 493C1317 493 1319 505.800 1325.500 505.800C1329.500 505.800 1332.500 502 1333.800 499" fill="none" stroke="#222" stroke-width="1.600"/>
<path d="M1327.500 524.200H1333.800V553.700H1304.300V546.500" fill="none" stroke="#222" stroke-width="1.400"/>
<path d="M1304.300 546.500V524.200H1327.500" fill="none" stroke="#222" stroke-width="1.400" stroke-dasharray="1.800 2"/>
<path d="M1304.300 546.500L1327.500 524.200" stroke="#7a94b0" stroke-width="1.500"/>
<path d="M1324.800 562.200H1333.800V591.500H1304.300V582.400" fill="none" stroke="#222" stroke-width="1.400"/>
<path d="M1304.300 582.400V562.200H1324.800" fill="none" stroke="#222" stroke-width="1.400" stroke-dasharray="1.800 2"/>
<path d="M1304.300 582.400Q1305.500 563.500 1324.800 562.200" fill="none" stroke="#7a94b0" stroke-width="1.500"/>
<path d="M1310.900 626.600L1317.400 602.300" stroke="#222" stroke-width="1.800"/><path d="M1304.300 614.500H1310.500" stroke="#222" stroke-width="2"/>
<path d="M1317.500 614.500H1323.500M1327.500 614.500H1333.800" stroke="#8ab0d0" stroke-width="1.800"/>
<path d="M1327.500 664.800L1333.500 641.500" stroke="#222" stroke-width="1.800"/>
<path d="M1306.300 650H1317" stroke="#444" stroke-width="1.800"/><path d="M1320.800 650L1315.500 653.200V646.800Z" fill="#444"/>
<path d="M1304.300 657.900H1310.300" stroke="#222" stroke-width="2"/><path d="M1313 657.900H1318M1320.500 657.900H1325.500" stroke="#8ab0d0" stroke-width="1.800"/>
<path d="M1305.500 685.300L1313.300 677.400H1332.600L1322.800 685.300Z" fill="#606060"/><rect x="1304.300" y="689.300" width="17.100" height="16.400" fill="#666"/>
<path d="M1324.400 688.900L1333.800 681.200V697.400L1324.400 705.500Z" fill="#4585c5"/>
<path d="M1311.300 719.600H1306.300Q1304.300 719.600 1304.300 721.600V738.500Q1304.300 740.500 1306.300 740.500H1331.800Q1333.800 740.500 1333.800 738.500V721.600Q1333.800 719.600 1331.800 719.600H1328" fill="none" stroke="#333" stroke-width="1.500"/>
<rect x="1310.200" y="717" width="5.100" height="5" fill="#4a84bc"/><rect x="1323" y="717" width="5" height="5" fill="#4a84bc"/>
<path d="M1304.300 766.800H1333.800" stroke="#222" stroke-width="1.800"/>
<path d="M1312 761.200L1318 766.800L1312 772.600ZM1325.900 761.200L1319.800 766.800L1325.900 772.600Z" fill="#4a84bc"/>
</g>
</svg>

<!-- tab labels -->
<div class="abs" style="left:30px;top:64px;font-size:12px;line-height:15px;white-space:nowrap">MxCAD云图</div>
<div class="abs" style="left:109.5px;top:64px;font-size:12.5px;line-height:15px;font-weight:bold;letter-spacing:0.3px;white-space:nowrap">3.mxg*</div>

<div class="ctx" style="left:119.500px">0</div>
<div class="ctx" style="left:332px">ByLayer</div>
<div class="ctx" style="left:503.800px">ByLayer</div>

<!-- model tab -->
<div class="abs" style="left:89px;top:866.5px;font-size:12px;line-height:15px;white-space:nowrap">模型</div>

<!-- command area -->
<div class="abs" style="left:13px;top:903.5px;font-size:12.4px;line-height:16px;letter-spacing:0.6px;white-space:nowrap">点取缩放区域<span style="margin-left:1px">:</span></div>
<div class="abs" style="left:6px;top:920.5px;font-size:12.4px;line-height:16px;letter-spacing:0.6px;white-space:nowrap">命令<span style="margin-left:1px">:</span></div>
<div class="abs" style="left:45px;top:922px;width:2px;height:15px;background:#000"></div>

<!-- status bar -->
<div class="abs" style="left:4.3px;top:945.5px;font-size:12.5px;line-height:16px;white-space:pre">-7013.983913,</div>
<div class="abs" style="left:93.2px;top:945.5px;font-size:12.5px;line-height:16px;white-space:pre">100748.077763,</div>
<div class="abs" style="left:191.3px;top:945.5px;font-size:12.5px;line-height:16px;white-space:pre">0.000000</div>
<div class="sb" style="left:808px">栅格</div>
<div class="sb on" style="left:841px;width:35.5px">正交</div>
<div class="sb" style="left:880px">极轴</div>
<div class="sb on" style="left:913.5px;width:57.5px">对象捕捉</div>
<div class="sb on" style="left:974px;width:58px">对象追踪</div>
<div class="sb on" style="left:1034.5px;width:35px">DYN</div>
<div class="sb on" style="left:1072px;width:33.5px">线宽</div>
<div class="sb" style="left:1110px;color:#1c1cc8">提交软件问题或增加新功能</div>
<div class="sb" style="left:1290px;font-size:12.6px;color:#1c2838">MxCAD</div>

</body>
</html>
